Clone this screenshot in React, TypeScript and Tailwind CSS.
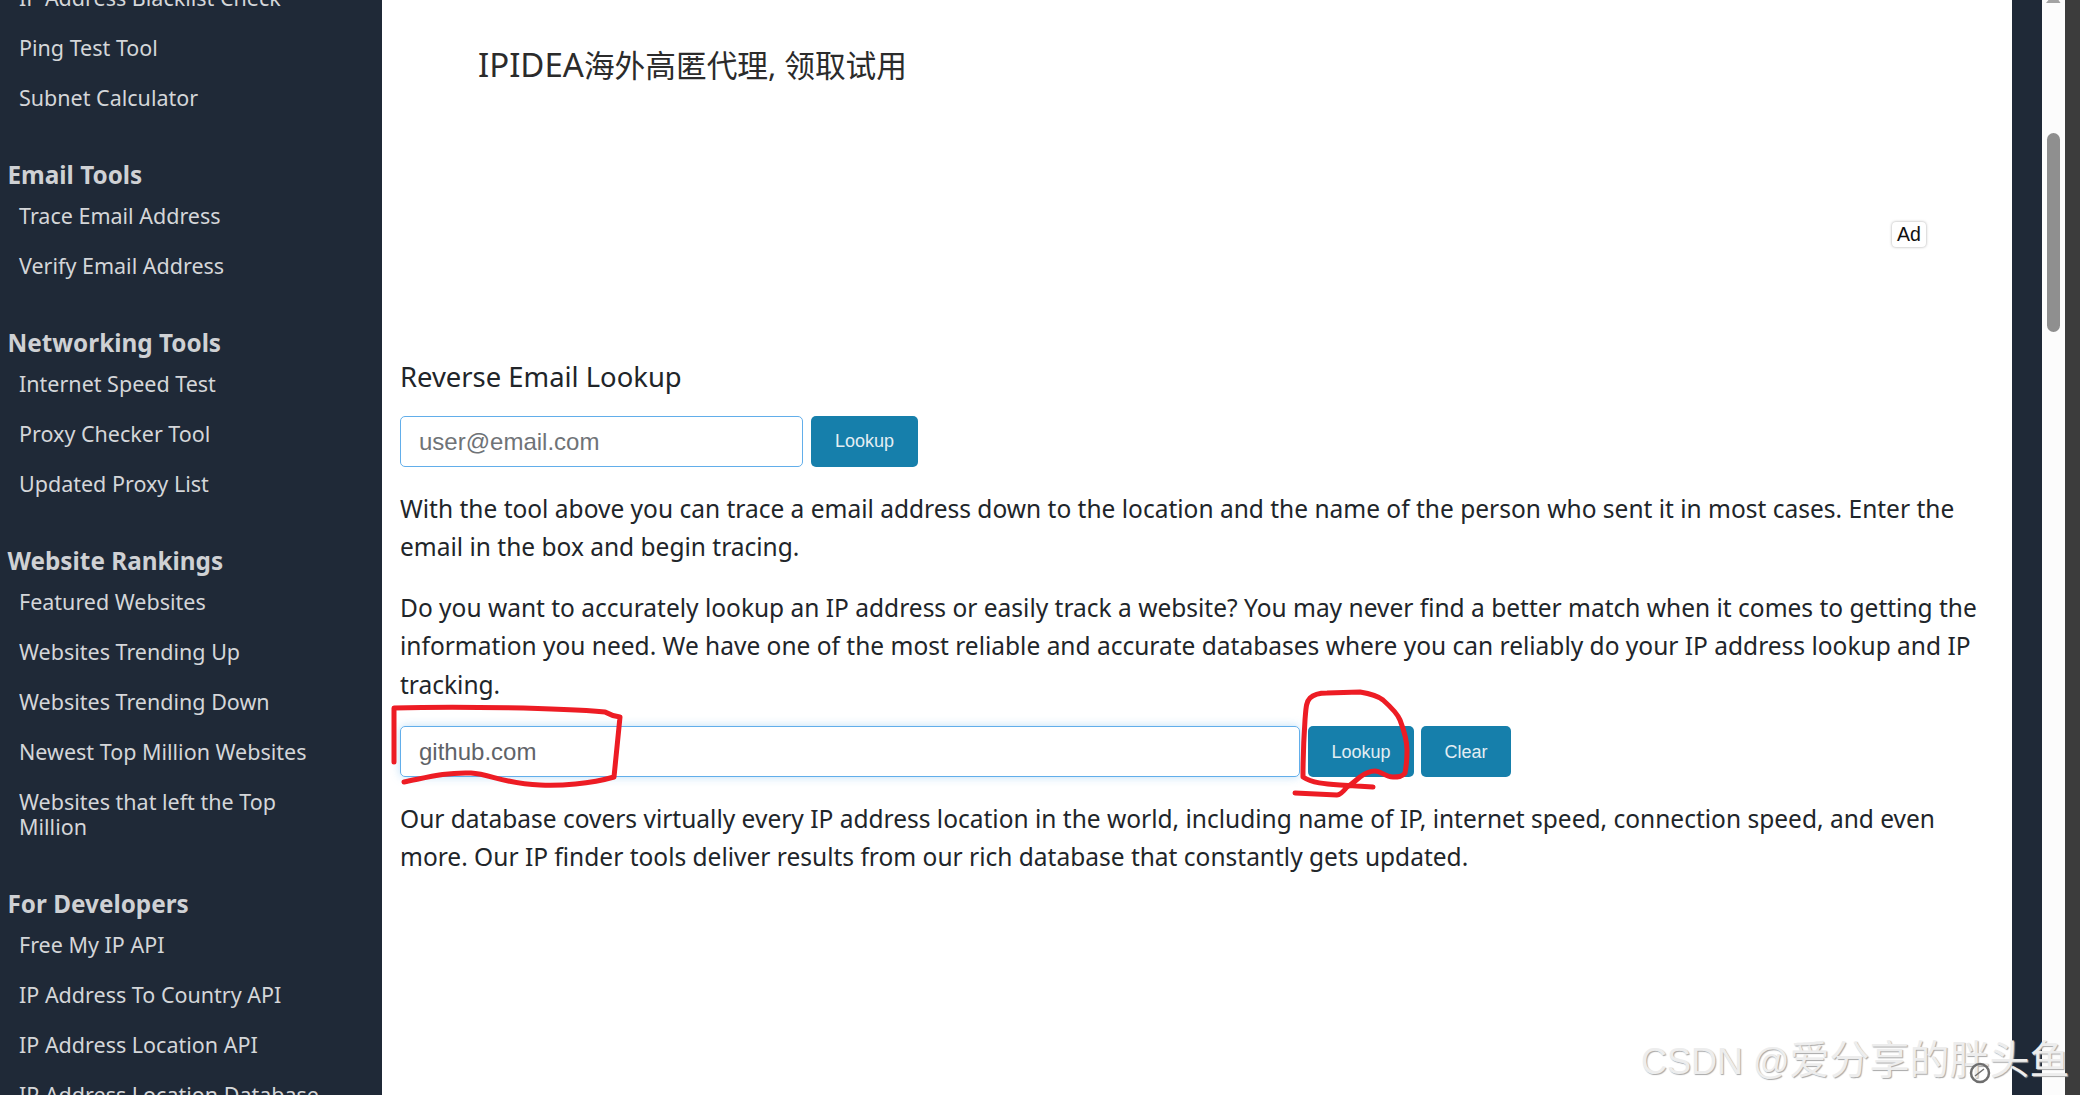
const groups = [
  { title: "", links: ["IP Address Blacklist Check", "Ping Test Tool", "Subnet Calculator"] },
  { title: "Email Tools", links: ["Trace Email Address", "Verify Email Address"] },
  { title: "Networking Tools", links: ["Internet Speed Test", "Proxy Checker Tool", "Updated Proxy List"] },
  {
    title: "Website Rankings",
    links: [
      "Featured Websites",
      "Websites Trending Up",
      "Websites Trending Down",
      "Newest Top Million Websites",
      "Websites that left the Top Million",
    ],
  },
  {
    title: "For Developers",
    links: ["Free My IP API", "IP Address To Country API", "IP Address Location API", "IP Address Location Database"],
  },
]

function Sidebar() {
  return (
    <aside className="w-[382px] shrink-0 overflow-hidden bg-[#1f2937] pl-[7.5px] pr-[53px] font-['Noto_Sans',sans-serif] text-[#d4d6d9]">
      <div className="-mt-[28px]">
        {groups.map((group) => (
          <div key={group.links[0]} className="mb-[37px]">
            {group.title && <h3 className="h-[31px] text-[24.3px] font-bold leading-[32px] text-[#cfd1d4]">{group.title}</h3>}
            <ul>
              {group.links.map((link) => (
                <li key={link} className="py-[12.5px] pl-[11.5px] text-[21.5px] leading-[25px]">
                  {link}
                </li>
              ))}
            </ul>
          </div>
        ))}
      </div>
    </aside>
  )
}

function Scrollbar() {
  return (
    <div className="flex w-[23px] shrink-0 justify-center bg-[#fcfcfc]">
      <svg width="15" height="3" viewBox="0 0 15 3" className="absolute top-0">
        <path d="M2.5 0h10l2 3H0z" fill="#a3a3a3" />
      </svg>
      <div className="mt-[133px] h-[199px] w-[13px] rounded-full bg-[#8f8f8f]" />
    </div>
  )
}

function Annotations() {
  return (
    <svg className="absolute left-0 top-0 pointer-events-none" width="2080" height="1095" fill="none" stroke="#ed1c24" strokeWidth="5" strokeLinecap="round" strokeLinejoin="round">
      <path d="M394 762 L394 708 C460 706 560 708 605 712 Q612 716 620 717 L614 777 C590 784 560 786 540 785 C505 784 490 774 471 773 C445 772 425 778 404 782" />
      <path d="M1373 787 L1340 785 C1325 784 1312 783 1303 777 C1303 755 1304 735 1305 720 C1306 708 1306 702 1310 698 C1314 694 1320 693 1327 693 L1360 692 C1372 694 1378 696 1383 700 C1392 708 1398 715 1400 720 C1405 733 1407 740 1407 750 C1407 760 1406 768 1405 773 C1402 777 1398 777 1393 777 C1385 777 1381 771 1375 771 C1368 771 1364 774 1360 777 C1355 781 1351 785 1347 787 C1343 792 1340 795 1337 795 L1295 793" />
    </svg>
  )
}

function Watermark() {
  return (
    <div className="absolute left-[1641px] top-[1036px] whitespace-nowrap font-['Liberation_Sans','Noto_Sans_CJK_SC',sans-serif] text-[40px] leading-[48px] text-[#ededed] [text-shadow:1px_1px_1px_#a8a8a8]">
      <span className="text-[36px]">CSDN @</span>爱分享的胖头鱼
    </div>
  )
}

export default function App() {
  return (
    <div className="relative flex h-[1095px] w-[2080px] overflow-hidden bg-white">
      <Sidebar />

      <main className="w-[1630px] shrink-0 px-[18px] font-['Noto_Sans',sans-serif] text-[24.5px] leading-[38.4px] text-[#212529]">
        <div className="relative h-[357px]">
          <p className="pl-[78px] pt-[45px] font-['Noto_Sans','Noto_Sans_CJK_SC',sans-serif] text-[30.7px] leading-[40px] text-[#2b2b2b]">
            <span className="text-[33px]">IPIDEA</span>海外高匿代理, 领取试用
          </p>
          <span className="absolute left-[1492px] top-[222px] rounded-[4px] bg-white px-[5px] font-['Liberation_Sans',sans-serif] text-[19.5px] leading-[25px] text-[#111] shadow-[0_0_3px_rgba(0,0,0,0.35)]">
            Ad
          </span>
        </div>

        <h2 className="mb-[19px] text-[27.4px] leading-[40px]">Reverse Email Lookup</h2>
        <div className="flex gap-[8px] font-['Liberation_Sans',sans-serif]">
          <div className="flex h-[51px] w-[403px] items-center rounded-[5px] border-[1.5px] border-[#62aeea] pl-[18px] pt-[2px] text-[24px] text-[#6f7377]">
            user@email.com
          </div>
          <button className="h-[51px] w-[107px] rounded-[5px] bg-[#167fab] text-[18px] text-[#e3eef3]">Lookup</button>
        </div>

        <p className="mt-[23px]">
          With the tool above you can trace a email address down to the location and the name of the person who sent it in most cases. Enter the email in the box and begin tracing.
        </p>
        <p className="mt-[22px]">
          Do you want to accurately lookup an IP address or easily track a website? You may never find a better match when it comes to getting the information you need. We have one of the most reliable and accurate databases where you can reliably do your IP address lookup and IP tracking.
        </p>

        <div className="mt-[22px] flex font-['Liberation_Sans',sans-serif]">
          <div className="flex h-[51px] w-[900px] items-center rounded-[5px] border-[1.5px] border-[#62aeea] pl-[18px] pt-[2px] text-[24px] text-[#5f6368] shadow-[0_0_10px_rgba(98,174,234,0.4)]">
            github.com
          </div>
          <button className="ml-[8px] h-[51px] w-[106px] rounded-[5px] bg-[#167fab] pt-[1px] text-[18px] text-[#e3eef3]">Lookup</button>
          <button className="ml-[7px] h-[51px] w-[90px] rounded-[5px] bg-[#167fab] pt-[1px] text-[18px] text-[#e3eef3]">Clear</button>
        </div>

        <p className="mt-[23px]">
          Our database covers virtually every IP address location in the world, including name of IP, internet speed, connection speed, and even more. Our IP finder tools deliver results from our rich database that constantly gets updated.
        </p>
      </main>

      <div className="w-[30px] shrink-0 bg-[#1f2937]" />
      <Scrollbar />
      <div className="w-[15px] shrink-0 bg-[#3c3c3c]" />

      <Annotations />
      <Watermark />
      <svg className="absolute left-[1969px] top-[1062px]" width="22" height="22" viewBox="0 0 22 22" fill="none" stroke="#6e6e6e" strokeWidth="2.5">
        <circle cx="11" cy="11" r="9" />
        <path d="M6 14l9-7" strokeWidth="1.5" />
      </svg>
    </div>
  )
}
